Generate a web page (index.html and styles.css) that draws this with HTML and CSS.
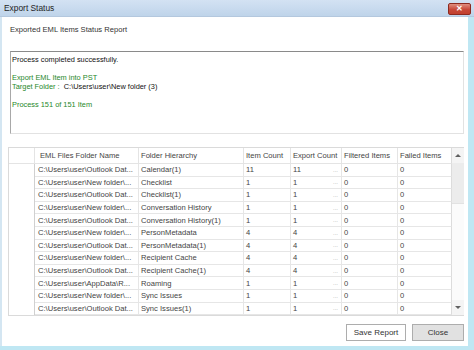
FILE: index.html
```html
<!DOCTYPE html>
<html lang="en">
<head>
    <meta charset="UTF-8">
    <meta name="viewport" content="width=device-width, initial-scale=1.0">
    <title>Export Status</title>
    <link rel="stylesheet" href="styles.css">
</head>
<body>
    <div class="titlebar">
        <span class="title">Export Status</span>
        <span class="close-x">&#10005;</span>
    </div>
    <div class="window">
        <div class="subtitle">Exported EML Items Status Report</div>

        <!-- log box -->
        <div class="log">
            <div>Process completed successfully.</div>
            <div>&nbsp;</div>
            <div class="green">Export EML Item into PST</div>
            <div><span class="green">Target Folder :</span>&nbsp;&nbsp;C:\Users\user\New folder (3)</div>
            <div>&nbsp;</div>
            <div class="green">Process 151 of 151 Item</div>
        </div>

        <!-- result grid -->
        <div class="grid">
            <div class="hd rowhead"></div>
            <div class="hd first">EML Files Folder Name</div>
            <div class="hd">Folder Hierarchy</div>
            <div class="hd">Item Count</div>
            <div class="hd">Export Count</div>
            <div class="hd">Filtered Items</div>
            <div class="hd last">Failed Items</div>
            <div class="scroll">
                <div class="arrow up"></div>
                <div class="track"></div>
                <div class="thumb"></div>
                <div class="arrow down"></div>
            </div>

            <div class="rowhead"></div><div class="c">C:\Users\user\Outlook Dat...</div><div class="c">Calendar(1)</div><div class="c">11</div><div class="c ex">11<i>...</i></div><div class="c">0</div><div class="c last">0</div>
            <div class="rowhead"></div><div class="c">C:\Users\user\New folder\...</div><div class="c">Checklist</div><div class="c">1</div><div class="c ex">1<i>...</i></div><div class="c">0</div><div class="c last">0</div>
            <div class="rowhead"></div><div class="c">C:\Users\user\Outlook Dat...</div><div class="c">Checklist(1)</div><div class="c">1</div><div class="c ex">1<i>...</i></div><div class="c">0</div><div class="c last">0</div>
            <div class="rowhead"></div><div class="c">C:\Users\user\New folder\...</div><div class="c">Conversation History</div><div class="c">1</div><div class="c ex">1<i>...</i></div><div class="c">0</div><div class="c last">0</div>
            <div class="rowhead"></div><div class="c">C:\Users\user\Outlook Dat...</div><div class="c">Conversation History(1)</div><div class="c">1</div><div class="c ex">1<i>...</i></div><div class="c">0</div><div class="c last">0</div>
            <div class="rowhead"></div><div class="c">C:\Users\user\New folder\...</div><div class="c">PersonMetadata</div><div class="c">4</div><div class="c ex">4<i>...</i></div><div class="c">0</div><div class="c last">0</div>
            <div class="rowhead"></div><div class="c">C:\Users\user\Outlook Dat...</div><div class="c">PersonMetadata(1)</div><div class="c">4</div><div class="c ex">4<i>...</i></div><div class="c">0</div><div class="c last">0</div>
            <div class="rowhead"></div><div class="c">C:\Users\user\New folder\...</div><div class="c">Recipient Cache</div><div class="c">4</div><div class="c ex">4<i>...</i></div><div class="c">0</div><div class="c last">0</div>
            <div class="rowhead"></div><div class="c">C:\Users\user\Outlook Dat...</div><div class="c">Recipient Cache(1)</div><div class="c">4</div><div class="c ex">4<i>...</i></div><div class="c">0</div><div class="c last">0</div>
            <div class="rowhead"></div><div class="c">C:\Users\user\AppData\R...</div><div class="c">Roaming</div><div class="c">1</div><div class="c ex">1<i>...</i></div><div class="c">0</div><div class="c last">0</div>
            <div class="rowhead"></div><div class="c">C:\Users\user\New folder\...</div><div class="c">Sync Issues</div><div class="c">1</div><div class="c ex">1<i>...</i></div><div class="c">0</div><div class="c last">0</div>
            <div class="rowhead"></div><div class="c">C:\Users\user\Outlook Dat...</div><div class="c">Sync Issues(1)</div><div class="c">1</div><div class="c ex">1<i>...</i></div><div class="c">0</div><div class="c last">0</div>
        </div>

        <div class="buttons">
            <button class="btn save">Save Report</button>
            <button class="btn close">Close</button>
        </div>
    </div>
</body>
</html>
```

FILE: styles.css
```css
body {
    margin: 0;
    width: 474px;
    height: 350px;
    overflow: hidden;
    background-color: #bfe7f3;
    font-family: "Liberation Sans", Arial, sans-serif;
    color: #333;
}
.titlebar {
    height: 17px;
    display: flex;
    align-items: center;
    justify-content: space-between;
    padding: 0 3px 0 4px;
    background: linear-gradient(#d3e2f3, #bfd4ea);
    border-bottom: 1px solid #b4c8de;
    box-sizing: border-box;
}
.title {
    font-size: 8.4px;
    color: #1e1e1e;
}
.close-x {
    width: 23px;
    height: 12px;
    margin-top: 1px;
    display: flex;
    align-items: center;
    justify-content: center;
    background: linear-gradient(#e08f80, #c8493a 55%, #c1402f);
    border: 1px solid #8c2a20;
    border-radius: 2px;
    box-sizing: border-box;
    color: white;
    font-size: 8px;
    font-weight: bold;
}
.window {
    width: 468px;
    height: 329px;
    box-sizing: border-box;
    background-color: white;
    border-left: 2px solid #d4e6f2;
    padding: 0 4px 0 6px;
}
.subtitle {
    font-size: 7.6px;
    line-height: 10px;
    padding-top: 8px;
    padding-left: 2px;
}
.log {
    margin: 16px 0 0 2px;
    height: 83px;
    box-sizing: border-box;
    border: 1px solid #e2e2e2;
    border-top-color: #8a8a8a;
    border-left-color: #a8a8a8;
    padding: 3px 0 0 1px;
    font-size: 7.4px;
    line-height: 9px;
    color: #111;
}
.green {
    color: #27882a;
}
.grid {
    margin-top: 13px;
    display: grid;
    grid-template-columns: 26px 104px 105px 47px 51px 56px 54px 12px;
    grid-template-rows: 16px repeat(12, 12.6px);
    border: 1px solid #dadada;
    font-size: 7.6px;
    color: #444;
}
.hd {
    display: flex;
    align-items: center;
    padding-left: 2px;
    border-right: 1px solid #e4e4e4;
    border-bottom: 1px solid #e4e4e4;
    white-space: nowrap;
}
.hd.first {
    padding-left: 5px;
}
.rowhead {
    border-right: 1px solid #d0d0d0;
}
.hd.rowhead {
    border-right: 1px solid #e4e4e4;
}
.c {
    display: flex;
    align-items: center;
    padding-left: 2px;
    border-right: 1px solid #e6e6e6;
    border-bottom: 1px solid #e6e6e6;
    white-space: nowrap;
    overflow: hidden;
}
.c:nth-child(7n+3) {
    padding-left: 3px;
}
.ex {
    justify-content: space-between;
    padding-right: 3px;
}
.ex i {
    font-style: normal;
    color: #a8a8a8;
    font-size: 6px;
}
.last {
    border-right: 1px solid #dcdcdc;
}
/* scrollbar spans the whole grid height */
.scroll {
    grid-column: 8;
    grid-row: 1 / span 13;
    display: flex;
    flex-direction: column;
    background-color: #f0f0f0;
}
.arrow {
    height: 15px;
    display: flex;
    align-items: center;
    justify-content: center;
    background-color: #f4f4f4;
}
.arrow::before {
    content: "";
    border-left: 3px solid transparent;
    border-right: 3px solid transparent;
}
.up::before {
    border-bottom: 3px solid #606060;
}
.down::before {
    border-top: 3px solid #606060;
}
.track {
    height: 40px;
    background-color: #ececec;
}
.thumb {
    flex: 1;
    background-color: #fbfbfb;
    border-top: 1px solid #e2e2e2;
}
.buttons {
    display: flex;
    justify-content: flex-end;
    gap: 6px;
    margin-top: 8px;
}
.btn {
    height: 17px;
    padding: 0;
    font-family: "Liberation Sans", Arial, sans-serif;
    font-size: 8px;
    color: #333;
    border: 1px solid #adadad;
    border-radius: 0;
}
.save {
    width: 60px;
    background-color: white;
}
.close {
    width: 52px;
    background-color: #e1e1e1;
}
```
